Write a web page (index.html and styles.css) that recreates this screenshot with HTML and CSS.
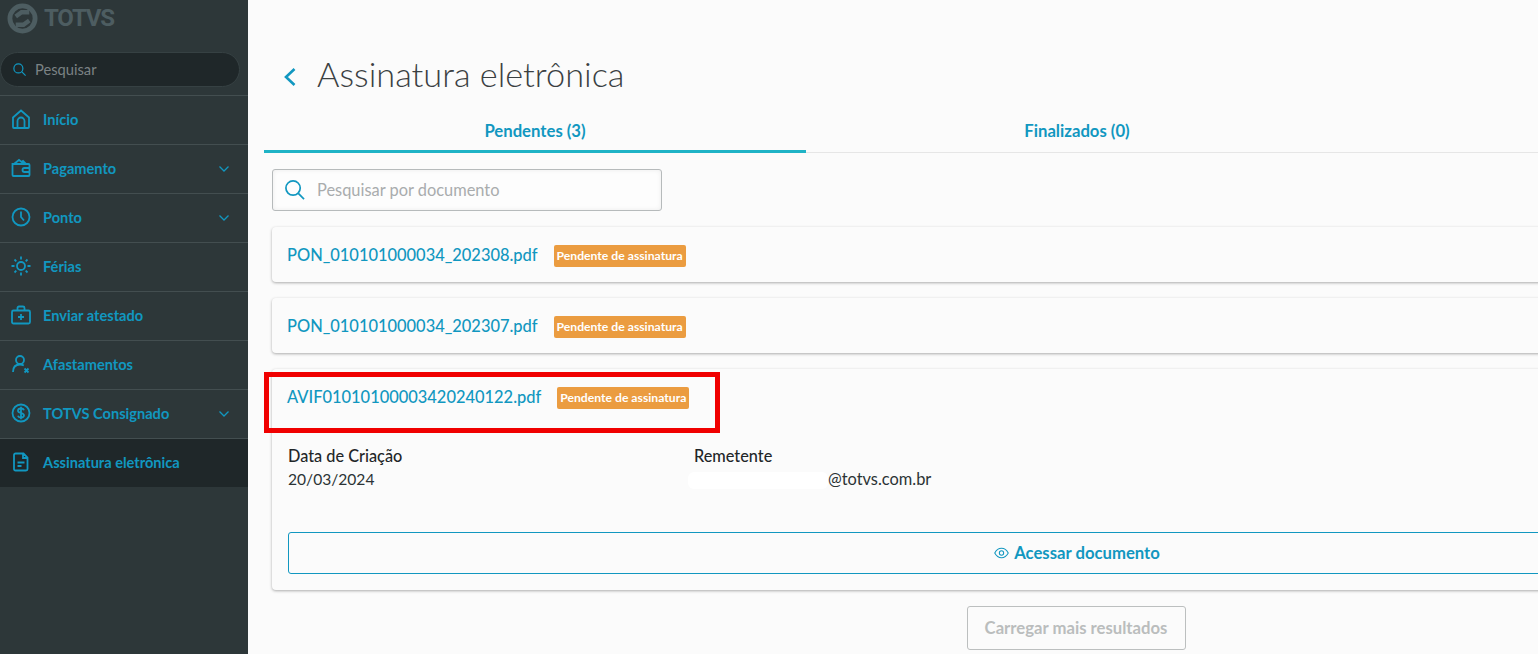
FILE: index.html
```html
<!DOCTYPE html>
<html lang="pt-BR">
<head>
<meta charset="utf-8">
<title>Assinatura eletrônica</title>
<link rel="stylesheet" href="styles.css">
</head>
<body>
<div class="app">
  <aside class="sidebar">
    <div class="brand">
      <svg class="brand-mark" viewBox="0 0 32 32" fill="none" stroke="#4d5d61"><circle cx="16" cy="16" r="13" stroke-width="5"/><path d="M9 14 15 9.500h8M23 18 17 22.500H9" stroke-width="4.500"/></svg>
      <span class="brand-name">TOTVS</span>
    </div>
    <div class="side-search-wrap">
      <div class="side-search">
        <svg class="i16" viewBox="0 0 16 16" fill="none" stroke="#1197c0" stroke-width="1.300"><circle cx="6.800" cy="6.800" r="4.800"/><path d="m10.300 10.300 4.200 4.200"/></svg>
        <span>Pesquisar</span>
      </div>
    </div>
    <nav class="menu">
      <a class="menu-item">
        <svg class="mi" viewBox="0 0 20 20"><path d="M2 8.500 10 1.500l8 7V18a1 1 0 0 1-1 1H3a1 1 0 0 1-1-1zM6.500 19v-7a3.500 3.500 0 0 1 7 0v7"/></svg>
        <span class="label">Início</span>
      </a>
      <a class="menu-item">
        <svg class="mi" viewBox="0 0 20 20"><path d="M1.500 6h16a1 1 0 0 1 1 1v10a1 1 0 0 1-1 1h-15a1 1 0 0 1-1-1zM3 6l5-4 2.500 2L12 3l3 3M18.500 10h-5a2 2 0 0 0 0 4h5"/></svg>
        <span class="label">Pagamento</span>
        <svg class="chev" viewBox="0 0 12 8"><path d="m1.500 1.500 4.500 4.500 4.500-4.500"/></svg>
      </a>
      <a class="menu-item">
        <svg class="mi" viewBox="0 0 20 20"><circle cx="10" cy="10" r="8.500"/><path d="M10 4.500V10l3 3.500"/></svg>
        <span class="label">Ponto</span>
        <svg class="chev" viewBox="0 0 12 8"><path d="m1.500 1.500 4.500 4.500 4.500-4.500"/></svg>
      </a>
      <a class="menu-item">
        <svg class="mi" viewBox="0 0 20 20"><circle cx="10" cy="10" r="4"/><path d="M10 .5v3M10 16.500v3M.5 10h3M16.500 10h3M3.500 3.500l1.800 1.800M14.700 14.700l1.800 1.800M3.500 16.500l1.800-1.800M14.700 5.300l1.800-1.800"/></svg>
        <span class="label">Férias</span>
      </a>
      <a class="menu-item">
        <svg class="mi" viewBox="0 0 20 20"><path d="M2.500 5.500h15a1.500 1.500 0 0 1 1.500 1.500v10a1.500 1.500 0 0 1-1.500 1.500h-15A1.500 1.500 0 0 1 1 17V7a1.500 1.500 0 0 1 1.500-1.500zM6.500 5.500V3a1.500 1.500 0 0 1 1.500-1.500h4A1.500 1.500 0 0 1 13.500 3v2.500M10 9v6M7 12h6"/></svg>
        <span class="label">Enviar atestado</span>
      </a>
      <a class="menu-item">
        <svg class="mi" viewBox="0 0 20 20"><circle cx="9" cy="6" r="4"/><path d="M2 18c0-4.500 2.500-7.500 7-7.500 1.500 0 2.800.4 3.800 1M13.500 14.500l4 4M17.500 14.500l-4 4"/></svg>
        <span class="label">Afastamentos</span>
      </a>
      <a class="menu-item">
        <svg class="mi" viewBox="0 0 20 20"><circle cx="10" cy="10" r="8.500"/><path d="M13 7.200C12.600 6 11.500 5.500 10 5.500c-1.800 0-3 .9-3 2.200 0 3 6 1.600 6 4.600 0 1.300-1.300 2.200-3 2.200-1.600 0-2.700-.6-3.100-1.800M10 3.800v12.400"/></svg>
        <span class="label">TOTVS Consignado</span>
        <svg class="chev" viewBox="0 0 12 8"><path d="m1.500 1.500 4.500 4.500 4.500-4.500"/></svg>
      </a>
      <a class="menu-item active">
        <svg class="mi" viewBox="0 0 20 20"><path d="M4.500 1.500h8l4 4V17a1.500 1.500 0 0 1-1.500 1.500H4.500A1.500 1.500 0 0 1 3 17V3a1.500 1.500 0 0 1 1.500-1.500zM12 1.500V6h4.500M6.500 10.500h7M6.500 14h4"/></svg>
        <span class="label">Assinatura eletrônica</span>
      </a>
    </nav>
  </aside>

  <main class="main">
    <div class="content">
      <header class="page-head">
        <svg class="back" viewBox="0 0 14 20"><path d="M11.500 2 3 10l8.500 8"/></svg>
        <h1>Assinatura eletrônica</h1>
      </header>

      <div class="tabs">
        <div class="tab current">Pendentes (3)</div>
        <div class="tab">Finalizados (0)</div>
        <div class="tab"></div>
      </div>

      <div class="body">
        <div class="doc-search">
          <svg class="doc-search-icon" viewBox="0 0 22 22" fill="none" stroke="#1197c0" stroke-width="1.800"><circle cx="9.500" cy="9.500" r="7.500"/><path d="m15 15 6 6"/></svg>
          <span>Pesquisar por documento</span>
        </div>

        <section class="card">
          <div class="card-head">
            <a class="doc-name">PON_010101000034_202308.pdf</a>
            <span class="badge">Pendente de assinatura</span>
          </div>
        </section>

        <section class="card">
          <div class="card-head">
            <a class="doc-name">PON_010101000034_202307.pdf</a>
            <span class="badge">Pendente de assinatura</span>
          </div>
        </section>

        <section class="card open">
          <div class="card-head">
            <a class="doc-name">AVIF01010100003420240122.pdf</a>
            <span class="badge">Pendente de assinatura</span>
          </div>
          <div class="details">
            <div class="field">
              <div class="field-label">Data de Criação</div>
              <div class="field-value">20/03/2024</div>
            </div>
            <div class="field">
              <div class="field-label">Remetente</div>
              <div class="field-value sender"><span class="redacted"></span>@totvs.com.br</div>
            </div>
          </div>
          <a class="access">
            <svg class="eye" viewBox="0 0 16 12" fill="none" stroke="#1197c0" stroke-width="1.100"><path d="M.8 6C2.500 2.800 5 1 8 1s5.500 1.800 7.200 5C13.500 9.200 11 11 8 11S2.500 9.200.8 6z"/><circle cx="8" cy="6" r="2.300"/></svg>
            Acessar documento
          </a>
        </section>

        <div class="more-row">
          <button class="more" type="button">Carregar mais resultados</button>
        </div>
      </div>
    </div>
    <div class="highlight"></div>
  </main>
</div>
</body>
</html>
```

FILE: styles.css
```css
* { box-sizing: border-box; }

html, body {
  margin: 0;
  height: 100%;
  overflow: hidden;
  background: #fbfbfb;
  font-family: "Lato", "Open Sans", sans-serif;
}

.app {
  display: flex;
  height: 654px;
  overflow: hidden;
}

/* Sidebar */
.sidebar {
  flex: 0 0 248px;
  background: #2d3739;
  color: #1197c0;
}

.brand {
  height: 52px;
  display: flex;
  align-items: flex-start;
  padding: 3px 0 0 7px;
  gap: 6px;
}

.brand-mark { width: 31px; height: 31px; }

.brand-name {
  font-family: "Roboto", sans-serif;
  font-weight: 700;
  font-size: 24px;
  line-height: 31px;
  letter-spacing: -1.200px;
  color: #4d5d61;
}

.side-search-wrap {
  height: 44px;
  padding: 0 8px 0 0;
  border-bottom: 1px solid #434e50;
}

.side-search {
  height: 35px;
  border-radius: 18px;
  background: #1f2729;
  border: 1px solid #364143;
  display: flex;
  align-items: center;
  padding: 0 0 1px 11px;
  gap: 8px;
  font-size: 14.7px;
  color: #7b8284;
}

.i16 { width: 15px; height: 15px; }

.menu-item {
  height: 49px;
  display: flex;
  align-items: center;
  padding: 0 18px 3px 11px;
  border-bottom: 1px solid #434e50;
  font-size: 14.6px;
  font-weight: 700;
}

.menu-item.active {
  height: 48px;
  background: #1f2729;
  border-bottom-color: #1f2729;
  padding-bottom: 2px;
}

.mi {
  width: 20px;
  height: 20px;
  flex: none;
  fill: none;
  stroke: #1197c0;
  stroke-width: 1.800;
}

.label {
  margin-left: 12px;
  padding-top: 2px;
  flex: 1;
}

.chev {
  width: 12px;
  height: 8px;
  margin-top: 3px;
  fill: none;
  stroke: #1197c0;
  stroke-width: 1.300;
}

/* Main */
.main {
  flex: 1;
  min-width: 0;
  position: relative;
  overflow: hidden;
}

.content {
  width: 1626px;
  margin-left: 16px;
}

.page-head {
  height: 102px;
  padding: 49px 0 0 19px;
  display: flex;
  align-items: flex-start;
  gap: 20px;
}

.back {
  width: 14px;
  height: 20px;
  margin-top: 18px;
  fill: none;
  stroke: #1197c0;
  stroke-width: 2.600;
}

h1 {
  margin: 0;
  font-size: 34.3px;
  line-height: 50px;
  font-weight: 300;
  color: #3a4042;
}

.tabs {
  display: flex;
  height: 51px;
  border-bottom: 1px solid #e6e6e6;
}

.tab {
  flex: 1;
  text-align: center;
  font-size: 16.7px;
  font-weight: 700;
  color: #1197c0;
  line-height: 58px;
  height: 51px;
}

.tab.current { border-bottom: 3px solid #1fb3c6; }

.body {
  padding: 16px 8px 0;
}

.doc-search {
  width: 390px;
  height: 42px;
  border: 1px solid #b6babb;
  border-radius: 3px;
  box-shadow: inset 0 0 5px rgba(0, 0, 0, .07);
  background: #fdfdfd;
  display: flex;
  align-items: center;
  padding: 0 0 1px 11px;
  gap: 12px;
  font-size: 16.4px;
  color: #a9acad;
}

.doc-search-icon { width: 21px; height: 21px; }

.card {
  margin-top: 16px;
  border-radius: 4px;
  background: #fbfbfb;
  box-shadow: 0 1px 3px rgba(0, 0, 0, .32);
  height: 55px;
  padding: 0 16px 0 15px;
}

.card.open { height: 221px; }

.card-head {
  display: flex;
  align-items: center;
  height: 55px;
  gap: 16px;
}

.doc-name {
  font-size: 16.450px;
  font-weight: 500;
  color: #1197c0;
}

.badge {
  height: 22px;
  width: 132px;
  margin-top: 2px;
  border-radius: 2px;
  background: #eb9c40;
  color: #fff;
  font-size: 12.2px;
  font-weight: 700;
  line-height: 22px;
  text-align: center;
  white-space: nowrap;
}

.details {
  display: flex;
  margin-top: 19px;
  padding-left: 1px;
  font-size: 16.3px;
  color: #2b3335;
}

.field { width: 406px; }

.field-label {
  font-weight: 500;
  padding-top: 1px;
  line-height: 23px;
  color: #1f2628;
}

.field-value {
  line-height: 24px;
  font-size: 15.6px;
}

.sender {
  position: relative;
  padding-left: 134px;
  font-size: 16.4px;
}

.redacted {
  position: absolute;
  left: -6px;
  top: 5px;
  width: 140px;
  height: 17px;
  border-radius: 6px;
  background: #fff;
}

.access {
  margin-top: 41px;
  margin-left: 1px;
  height: 42px;
  border: 1px solid #1197c0;
  border-radius: 3px;
  display: flex;
  align-items: center;
  justify-content: center;
  gap: 5px;
  color: #1197c0;
  font-size: 16.7px;
  font-weight: 700;
}

.eye { width: 15px; height: 12px; }

.more-row {
  display: flex;
  justify-content: center;
  margin-top: 16px;
  padding-right: 2px;
}

.more {
  width: 219px;
  height: 44px;
  border: 1px solid #bcbfbf;
  border-radius: 3px;
  background: transparent;
  color: #babdbd;
  font-family: inherit;
  font-size: 16.7px;
  font-weight: 700;
}

.highlight {
  position: absolute;
  left: 16px;
  top: 372px;
  width: 456px;
  height: 61px;
  border: 5px solid #f00000;
  pointer-events: none;
}
```
